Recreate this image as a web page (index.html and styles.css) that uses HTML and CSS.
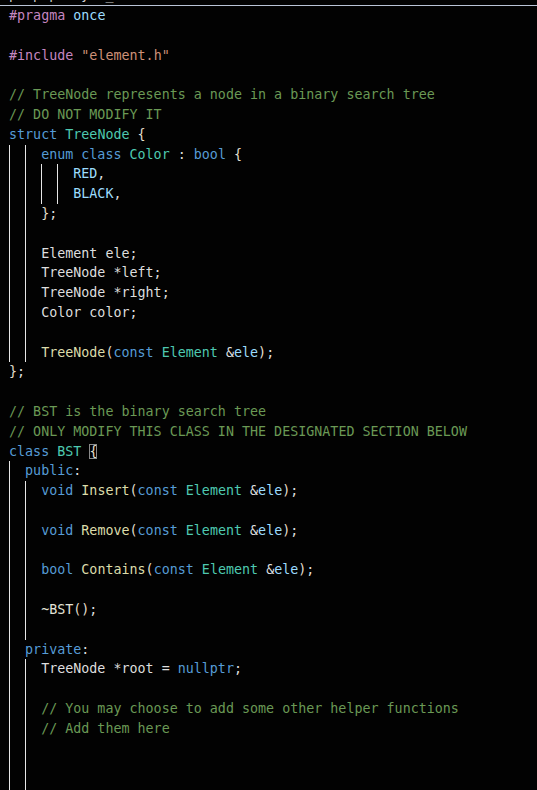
FILE: index.html
```html
<!DOCTYPE html>
<html>
<head>
<meta charset="utf-8">
<link rel="stylesheet" href="styles.css">
</head>
<body>
<div class="editor">
  <div class="sticky"><div class="sticky-text">p  p p   y  _</div></div>
  <div class="code">
    <div class="ln"><span class="pp">#pragma</span> <span class="var">once</span></div>
    <div class="ln"> </div>
    <div class="ln"><span class="pp">#include</span> <span class="str">"element.h"</span></div>
    <div class="ln"> </div>
    <div class="ln"><span class="cm">// TreeNode represents a node in a binary search tree</span></div>
    <div class="ln"><span class="cm">// DO NOT MODIFY IT</span></div>
    <div class="ln"><span class="kw">struct</span> <span class="ty">TreeNode</span> <span class="br">{</span></div>
    <div class="guide">
      <div class="guide">
        <div class="ln"><span class="kw">enum class</span> <span class="ty">Color</span> : <span class="kw">bool</span> <span class="br">{</span></div>
        <div class="guide">
          <div class="guide">
            <div class="ln"><span class="var">RED</span>,</div>
            <div class="ln"><span class="var">BLACK</span>,</div>
          </div>
        </div>
        <div class="ln"><span class="br">}</span>;</div>
        <div class="ln"> </div>
        <div class="ln">Element ele;</div>
        <div class="ln">TreeNode *left;</div>
        <div class="ln">TreeNode *right;</div>
        <div class="ln">Color color;</div>
        <div class="ln"> </div>
        <div class="ln"><span class="fn">TreeNode</span><span class="br">(</span><span class="kw">const</span> <span class="ty">Element</span> &amp;<span class="var">ele</span><span class="br">)</span>;</div>
      </div>
    </div>
    <div class="ln"><span class="br">}</span>;</div>
    <div class="ln"> </div>
    <div class="ln"><span class="cm">// BST is the binary search tree</span></div>
    <div class="ln"><span class="cm">// ONLY MODIFY THIS CLASS IN THE DESIGNATED SECTION BELOW</span></div>
    <div class="ln"><span class="kw">class</span> <span class="ty">BST</span> <span class="br match">{</span></div>
    <div class="guide">
      <div class="ln"><span class="kw">public</span>:</div>
      <div class="guide">
        <div class="ln"><span class="kw">void</span> <span class="fn">Insert</span><span class="br">(</span><span class="kw">const</span> <span class="ty">Element</span> &amp;<span class="var">ele</span><span class="br">)</span>;</div>
        <div class="ln"> </div>
        <div class="ln"><span class="kw">void</span> <span class="fn">Remove</span><span class="br">(</span><span class="kw">const</span> <span class="ty">Element</span> &amp;<span class="var">ele</span><span class="br">)</span>;</div>
        <div class="ln"> </div>
        <div class="ln"><span class="kw">bool</span> <span class="fn">Contains</span><span class="br">(</span><span class="kw">const</span> <span class="ty">Element</span> &amp;<span class="var">ele</span><span class="br">)</span>;</div>
        <div class="ln"> </div>
        <div class="ln"><span class="dtor">~BST</span><span class="br">()</span>;</div>
        <div class="ln"> </div>
      </div>
      <div class="ln"><span class="kw">private</span>:</div>
      <div class="guide">
        <div class="ln">TreeNode *root = <span class="kw">nullptr</span>;</div>
        <div class="ln"> </div>
        <div class="ln"><span class="cm">// You may choose to add some other helper functions</span></div>
        <div class="ln"><span class="cm">// Add them here</span></div>
        <div class="ln"> </div>
        <div class="ln"> </div>
        <div class="ln"> </div>
      </div>
    </div>
  </div>
</div>
</body>
</html>
```

FILE: styles.css
```css
html, body {
  margin: 0;
  padding: 0;
  background: #020202;
  overflow: hidden;
}

.editor {
  width: 537px;
  height: 790px;
  overflow: hidden;
  background: #020202;
  font-family: "DejaVu Sans Mono", "Liberation Mono", monospace;
  font-size: 13.35px;
  color: #dedede;
}

.sticky {
  height: 5px;
  overflow: hidden;
  border-bottom: 1px solid #b9c3d6;
  padding-left: 9px;
}

.sticky-text {
  line-height: 19.8px;
  margin-top: -15px;
  white-space: pre;
  color: #cfcfcf;
}

.code {
  padding-left: 9px;
}

.ln {
  height: 19.8px;
  line-height: 19.8px;
  white-space: pre;
}

.guide {
  border-left: 1px solid #e6e6e6;
  padding-left: calc(2ch - 1px);
}

.pp { color: #c586c0; }
.var { color: #9cdcfe; }
.str { color: #ce9178; }
.cm { color: #6a9955; }
.kw { color: #569cd6; }
.ty { color: #4ec9b0; }
.fn { color: #dcdcaa; }
.dtor { color: #e4e4d8; }
.br { color: #e2dfcc; }

.match {
  outline: 1px solid #8a8a8a;
  outline-offset: -1px;
}
```
